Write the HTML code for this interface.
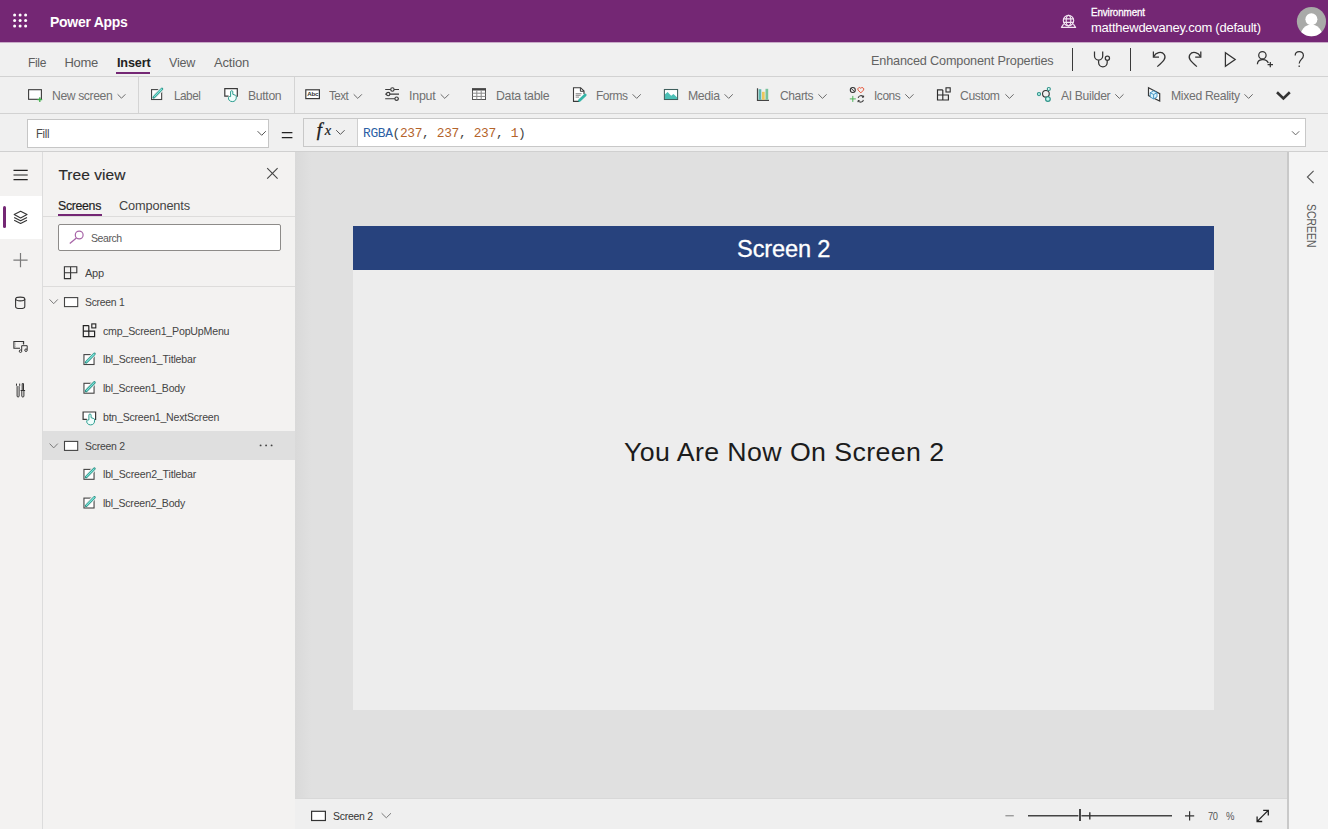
<!DOCTYPE html>
<html>
<head>
<meta charset="utf-8">
<title>Power Apps</title>
<style>
*{box-sizing:border-box;margin:0;padding:0}
html,body{width:1328px;height:830px;overflow:hidden;background:#f3f2f1;font-family:"Liberation Sans",sans-serif;color:#333}
.abs,.t{position:absolute}
.t{white-space:pre;line-height:1;color:#3b3a39}
svg{position:absolute;overflow:visible}
#hdr{left:0;top:0;width:1328px;height:43px;background:linear-gradient(#742774 0,#742774 42px,#c8abc8 42px,#c8abc8 43px)}
#menu{left:0;top:43px;width:1328px;height:33px;background:#f0f0f0}
#tool{left:0;top:76px;width:1328px;height:38px;background:#f0f0f0;border-top:1px solid #d2d2d2;border-bottom:1px solid #d2d2d2}
#fbar{left:0;top:114px;width:1328px;height:38px;background:#f0f0f0;border-bottom:1px solid #d0d0d0}
#rail{left:0;top:152px;width:43px;height:678px;background:#f3f2f1;border-right:1px solid #dcdcdc}
#tree{left:43px;top:152px;width:252px;height:678px;background:#f3f2f1}
#canvas{left:295px;top:152px;width:993px;height:646px;background:#e0e0e0}
#foot{left:295px;top:798px;width:993px;height:32px;background:#efefef;border-top:1px solid #d8d8d8}
#right{left:1287px;top:152px;width:41px;height:678px;background:#f4f4f4;border-left:2px solid #c9c9c9}
.w{color:#fff}
.tb{color:#6b6b6b}
</style>
</head>
<body>
<div class="abs" id="hdr"></div>
<div class="abs" id="menu"></div>
<div class="abs" id="tool"></div>
<div class="abs" id="fbar"></div>
<div class="abs" id="rail"></div>
<div class="abs" id="tree"></div>
<div class="abs" id="canvas"></div>
<div class="abs" id="foot"></div>
<div class="abs" id="right"></div>
<!-- HEADER -->
<svg style="left:13px;top:13px" width="15" height="15" viewBox="0 0 15 15" fill="#fff">
<circle cx="1.6" cy="2" r="1.5"/><circle cx="7.1" cy="2" r="1.5"/><circle cx="12.6" cy="2" r="1.5"/>
<circle cx="1.6" cy="7.5" r="1.5"/><circle cx="7.1" cy="7.5" r="1.5"/><circle cx="12.6" cy="7.5" r="1.5"/>
<circle cx="1.6" cy="13" r="1.5"/><circle cx="7.1" cy="13" r="1.5"/><circle cx="12.6" cy="13" r="1.5"/>
</svg>
<span class="t" style="left:49.5px;top:15px;font-size:14.5px;letter-spacing:-0.288px;transform-origin:0 0;transform:scaleX(0.9641);font-weight:700;color:#fff">Power Apps</span>
<svg style="left:1060px;top:14px" width="18" height="16" viewBox="1060 14 18 16" fill="none" stroke="#f1e4f1" stroke-width="1.15">
<circle cx="1068.5" cy="20.6" r="5.2"/><ellipse cx="1068.5" cy="20.6" rx="2.3" ry="5.2"/><path d="M1063.6 18.8h9.8M1063.6 22.4h9.8"/>
<path d="M1063.6 24.2 L1061.4 27.4 H1075.6 L1073.4 24.2" stroke-linejoin="round"/>
</svg>
<span class="t" style="left:1090.7px;top:8px;font-size:10px;letter-spacing:-0.097px;transform-origin:0 0;transform:scaleX(0.9806);color:#fff;-webkit-text-stroke:.3px #fff">Environment</span>
<span class="t" style="left:1090.7px;top:21px;font-size:13.5px;letter-spacing:-0.246px;transform-origin:0 0;transform:scaleX(0.9610);color:#fff">matthewdevaney.com (default)</span>
<svg style="left:1296px;top:6px" width="32" height="32" viewBox="1296 6 32 32">
<defs><clipPath id="avc"><circle cx="1311.45" cy="21.6" r="14.6"/></clipPath></defs>
<circle cx="1311.45" cy="21.6" r="14.6" fill="#a9aaa8"/>
<g clip-path="url(#avc)" fill="#fff"><circle cx="1311.4" cy="19.2" r="6"/><ellipse cx="1311.4" cy="37.2" rx="11.2" ry="12.8"/></g>
</svg>
<!-- MENU ROW -->
<span class="t" style="left:27.5px;top:56px;font-size:13px;letter-spacing:-0.369px;transform-origin:0 0;transform:scaleX(0.9242);color:#5e5e5e">File</span>
<span class="t" style="left:64.5px;top:56px;font-size:13px;letter-spacing:-0.297px;color:#5e5e5e">Home</span>
<span class="t" style="left:116.5px;top:56px;font-size:13px;letter-spacing:-0.159px;transform-origin:0 0;transform:scaleX(0.9723);font-weight:700;color:#222">Insert</span>
<div class="abs" style="left:116px;top:72px;width:34px;height:2px;background:#742774"></div>
<span class="t" style="left:169px;top:56px;font-size:13px;letter-spacing:-0.244px;transform-origin:0 0;transform:scaleX(0.9638);color:#5e5e5e">View</span>
<span class="t" style="left:214px;top:56px;font-size:13px;letter-spacing:-0.190px;color:#5e5e5e">Action</span>
<span class="t" style="left:871.3px;top:54px;font-size:13px;letter-spacing:-0.168px;transform-origin:0 0;transform:scaleX(0.9740);color:#636363">Enhanced Component Properties</span>
<div class="abs" style="left:1072px;top:48px;width:1px;height:23px;background:#3a3a3a"></div>
<div class="abs" style="left:1130px;top:48px;width:1px;height:23px;background:#3a3a3a"></div>
<svg style="left:0;top:0" width="1328" height="80" viewBox="0 0 1328 80" fill="none" stroke="#333" stroke-width="1.25" stroke-linecap="butt">
<!-- stethoscope -->
<path d="M1094.5 51.5 V56 a4.1 4.1 0 0 0 8.2 0 V51.5"/>
<path d="M1098.6 60.2 V62.5 a4.3 4.3 0 0 0 8.6 0 V60.4"/>
<circle cx="1107.4" cy="58.2" r="2.1"/>
<!-- undo -->
<path d="M1153.4 51.4 V57 H1159"/>
<path d="M1153.8 56.8 C1155.5 52.6 1161.5 50.6 1164.3 54.6 C1166.6 58.2 1163.6 61.2 1157.3 66.6"/>
<!-- redo -->
<path d="M1200.8 51.4 V57 H1195.2"/>
<path d="M1200.4 56.8 C1198.7 52.6 1192.7 50.6 1189.9 54.6 C1187.6 58.2 1190.6 61.2 1196.9 66.6"/>
<!-- play -->
<path d="M1225.4 52.7 V66.3 L1235.2 59.5 Z" stroke-linejoin="miter"/>
<!-- user plus -->
<circle cx="1262.4" cy="55.2" r="3.7"/>
<path d="M1257.4 64.3 C1257.4 58.8 1266.2 58 1268.3 63"/>
<path d="M1267.6 64.6 H1273 M1270.3 62 V67.2"/>
<!-- question -->
<path d="M1295.2 55.6 C1295.2 50.4 1303.4 50.4 1303.4 55.4 C1303.4 59.4 1299.2 59.4 1299.2 63.6"/>
<path d="M1299.2 65.4 V67" />
</svg>
<!-- TOOLBAR ROW -->
<div class="abs" style="left:138px;top:77px;width:1px;height:36px;background:#d4d4d4"></div>
<div class="abs" style="left:294px;top:77px;width:1px;height:36px;background:#d4d4d4"></div>
<span class="t" style="left:51.9px;top:89px;font-size:13px;letter-spacing:-0.417px;transform-origin:0 0;transform:scaleX(0.9353);color:#707070;">New screen</span>
<span class="t" style="left:173.7px;top:89px;font-size:13px;letter-spacing:-0.551px;transform-origin:0 0;transform:scaleX(0.9051);color:#707070;">Label</span>
<span class="t" style="left:247.8px;top:89px;font-size:13px;letter-spacing:-0.358px;transform-origin:0 0;transform:scaleX(0.9394);color:#707070;">Button</span>
<span class="t" style="left:329.4px;top:89px;font-size:13px;letter-spacing:-0.568px;transform-origin:0 0;transform:scaleX(0.8947);color:#707070;">Text</span>
<span class="t" style="left:408.7px;top:89px;font-size:13px;letter-spacing:-0.242px;transform-origin:0 0;transform:scaleX(0.9563);color:#707070;">Input</span>
<span class="t" style="left:495.8px;top:89px;font-size:13px;letter-spacing:-0.303px;transform-origin:0 0;transform:scaleX(0.9461);color:#707070;">Data table</span>
<span class="t" style="left:595.5px;top:89px;font-size:13px;letter-spacing:-0.534px;transform-origin:0 0;transform:scaleX(0.9218);color:#707070;">Forms</span>
<span class="t" style="left:687.7px;top:89px;font-size:13px;letter-spacing:-0.382px;transform-origin:0 0;transform:scaleX(0.9430);color:#707070;">Media</span>
<span class="t" style="left:779.9px;top:89px;font-size:13px;letter-spacing:-0.433px;transform-origin:0 0;transform:scaleX(0.9272);color:#707070;">Charts</span>
<span class="t" style="left:873.7px;top:89px;font-size:13px;letter-spacing:-0.478px;transform-origin:0 0;transform:scaleX(0.9167);color:#707070;">Icons</span>
<span class="t" style="left:960.4px;top:89px;font-size:13px;letter-spacing:-0.441px;transform-origin:0 0;transform:scaleX(0.9372);color:#707070;">Custom</span>
<span class="t" style="left:1060.7px;top:89px;font-size:13px;letter-spacing:-0.354px;transform-origin:0 0;transform:scaleX(0.9330);color:#707070;">AI Builder</span>
<span class="t" style="left:1170.7px;top:89px;font-size:13px;letter-spacing:-0.355px;transform-origin:0 0;transform:scaleX(0.9371);color:#707070;">Mixed Reality</span>
<svg style="left:0;top:0" width="1328" height="114" viewBox="0 0 1328 114" fill="none" stroke="#3a3a3a" stroke-width="1.1">
<!-- small chevrons -->
<g stroke="#6a6a6a" stroke-width="1">
<path d="M117.6 94.3 l3.9 3.9 l3.9 -3.9"/>
<path d="M353.7 94.3 l4.1 4.1 l4.1 -4.1"/>
<path d="M440.7 94.3 l4.1 4.1 l4.1 -4.1"/>
<path d="M632.6 94.3 l4.1 4.1 l4.1 -4.1"/>
<path d="M724.6 94.3 l4.1 4.1 l4.1 -4.1"/>
<path d="M818.4 94.3 l4.1 4.1 l4.1 -4.1"/>
<path d="M905.3 94.3 l4.1 4.1 l4.1 -4.1"/>
<path d="M1005.4 94.3 l4.1 4.1 l4.1 -4.1"/>
<path d="M1115.3 94.3 l4.1 4.1 l4.1 -4.1"/>
<path d="M1244.5 94.3 l4.1 4.1 l4.1 -4.1"/>
</g>
<!-- overflow chevron -->
<path d="M1277 92.3 l6.4 6.2 l6.4 -6.2" stroke="#333" stroke-width="2.6"/>
<!-- new screen -->
<rect x="28.6" y="89.7" width="12.8" height="9.6" fill="#fff"/>
<path d="M37.4 99.6 h4.8 M39.8 97.2 v4.8" stroke="#3fae49" stroke-width="1.3"/>
<!-- label -->
<rect x="151.55" y="89.6" width="10.1" height="9.9" fill="#fff" stroke="#444" stroke-width="1.1"/>
<path d="M155.5 95.4 L162 88.8" stroke="#f0f0f0" stroke-width="4.6" stroke-linecap="round"/>
<path d="M153.7 97.3 L162 88.8" stroke="#2a8f84" stroke-width="2.5" stroke-linecap="round"/>
<path d="M154.1 96.9 L161.8 89" stroke="#7fe9de" stroke-width="1.1" stroke-linecap="round"/>
<!-- button -->
<g id="btnico" fill="none"><path d="M228.6 96.1 H224.8 V88.7 H237.3 V96.1 H236.4" fill="#fff" stroke="#3a3a3a" stroke-width="1.2"/>
<path d="M230.6 96 V91.8 a1.1 1.1 0 0 1 2.2 0 V94.3 L235.5 95.3 Q236.4 95.7 236.3 96.8 C236.5 100 234.8 101.6 232.3 101.6 C229.6 101.6 228 99.4 228.5 97.5 Q229 96.1 230.6 96.6 z" fill="#effdfb" stroke="#2a9d8f" stroke-width="1"/></g>
<!-- text -->
<rect x="305.8" y="89.8" width="13.6" height="8.8" fill="#fff" stroke-width="1.2"/>
<!-- input -->
<path d="M385.2 89.5 h13.8 M385.2 94.1 h13.8 M385.2 98.7 h13.8" stroke-width="1.1"/>
<circle cx="392.4" cy="89.5" r="1.7" fill="#f0f0f0"/><circle cx="388.2" cy="94.1" r="1.7" fill="#f0f0f0"/><circle cx="396.6" cy="98.7" r="1.7" fill="#f0f0f0"/>
<!-- data table -->
<rect x="472.5" y="88.8" width="13" height="10.7" fill="#fff" stroke="#555" stroke-width="1"/>
<path d="M472 89.4 h14" stroke="#444" stroke-width="2.2"/>
<path d="M472.5 93.2 h13 M472.5 96.4 h13 M476.8 90.5 v9 M481.2 90.5 v9" stroke="#8a8a8a" stroke-width="1"/>
<!-- forms -->
<path d="M579 101.4 H573.5 V87.7 H580.6 L584 91.1 V94" fill="#fff" stroke-width="1.1"/>
<path d="M580.4 87.9 V91.3 H583.8" stroke-width="1"/>
<path d="M575.6 93.6 h6 M575.6 95.4 h5 M575.6 97.2 h3.5" stroke="#a0a0a0" stroke-width="1.3"/>
<path d="M579.4 100.4 L585.2 94.9" stroke="#36b5a8" stroke-width="2.8" stroke-linecap="round"/>
<!-- media -->
<rect x="664.4" y="89.5" width="13.2" height="10" fill="#fff" stroke="#3f5f5d" stroke-width="1.05"/>
<path d="M665 99 V94.2 l2.6 -2.3 l3.6 3.8 l2.2 -1.7 l3.6 3.2 V99 z" fill="#4cc0b6" stroke="none"/>
<!-- charts -->
<path d="M757.5 88.3 V100.4 H769" stroke="#444" stroke-width="1.2"/>
<rect x="758.6" y="89.2" width="2.7" height="10.6" fill="#5fb7b0" stroke="none"/>
<rect x="762" y="91.8" width="2.7" height="8" fill="#ecc75e" stroke="none"/>
<rect x="765.5" y="88.8" width="2.7" height="11" fill="#79c39a" stroke="none"/>
<!-- icons -->
<circle cx="852.8" cy="90" r="2.5" stroke="#333" stroke-width="1.1"/><path d="M851 88.2 l3.6 3.6" stroke="#333" stroke-width="1"/>
<path d="M860.8 92.9 l-2.7 -2.8 a1.6 1.6 0 0 1 2.7 -1.8 a1.6 1.6 0 0 1 2.7 1.8 z" stroke="#e7583c" stroke-width="1" fill="none"/>
<path d="M849.8 98.9 h6 M852.8 95.9 v6" stroke="#4cb357" stroke-width="1"/>
<path d="M858.2 98 a2.8 2.8 0 0 1 5 -1.2 M863.4 99.8 a2.8 2.8 0 0 1 -5 1.2" stroke="#444" stroke-width="1.1"/>
<path d="M863.6 95.6 v1.6 h-1.6 M858 102.2 v-1.6 h1.6" stroke="#333" stroke-width="1"/>
<!-- custom -->
<path d="M942.8 89.9 H937.5 V100 H948.4 V95 H937.5 M942.8 89.9 V100" stroke="#2e2e2e" stroke-width="1.15"/>
<rect x="946" y="87.8" width="4.2" height="4.2" stroke="#2e2e2e" stroke-width="1.1"/>
<!-- ai builder -->
<circle cx="1045.9" cy="93.8" r="3.35" stroke="#333" stroke-width="1.1"/>
<circle cx="1039" cy="94.1" r="1.6" stroke="#2f9389" stroke-width="1.1" fill="#b5f3ec"/>
<circle cx="1048.8" cy="89" r="1.55" stroke="#2f9389" stroke-width="1.1" fill="#e6fffb"/>
<circle cx="1047.9" cy="99.1" r="2.35" stroke="#2f9389" stroke-width="1.2" fill="#c6f6f0"/>
<!-- mixed reality -->
<path d="M1148.5 87.8 V95.6 L1159.7 101 V93.6 Z" stroke="#3a3a3a" stroke-width="1.2" fill="#fff" stroke-linejoin="miter"/>
<path d="M1153.6 90.9 L1157 92.7 V97 L1153.6 98.9 L1150.2 97 V92.7 Z" fill="#dcf3fb" stroke="#3d8fc2" stroke-width=".9" stroke-linejoin="round"/>
<path d="M1150.2 92.7 L1153.6 94.5 L1157 92.7 M1153.6 94.5 V98.9" stroke="#3d8fc2" stroke-width=".9"/>
</svg>
<span class="t" style="left:307.2px;top:91.2px;font-size:6.2px;font-weight:700;color:#333;letter-spacing:-0.2px">Abc</span>
<!-- FORMULA BAR -->
<div class="abs" style="left:27px;top:119px;width:242px;height:29px;background:#fff;border:1px solid #c6c6c6"></div>
<span class="t" style="left:35.8px;top:128px;font-size:12.5px;letter-spacing:-0.346px;transform-origin:0 0;transform:scaleX(0.9051);color:#4a4a4a">Fill</span>
<div class="abs" style="left:303px;top:118px;width:1003px;height:29px;background:#fff;border:1px solid #c8c8c8"></div>
<div class="abs" style="left:304px;top:119px;width:54px;height:27px;background:#f0f0f0;border-right:1px solid #cfcfcf"></div>
<span class="t" style="left:316.8px;top:121px;font-size:18.5px;font-family:'Liberation Serif',serif;font-style:italic;color:#1a1a1a;-webkit-text-stroke:.35px #1a1a1a">f</span>
<span class="t" style="left:324.8px;top:123px;font-size:14.5px;font-family:'Liberation Serif',serif;font-style:italic;color:#1a1a1a;-webkit-text-stroke:.2px #1a1a1a">x</span>
<span class="t" style="left:362.6px;top:127px;font-size:13.5px;font-family:'Liberation Mono',monospace;letter-spacing:-0.361px;transform-origin:0 0;transform:scaleX(0.9534);color:#444"><span style="color:#2c5fa5">RGBA</span>(<span style="color:#b4632a">237</span>, <span style="color:#b4632a">237</span>, <span style="color:#b4632a">237</span>, <span style="color:#b4632a">1</span>)</span>
<svg style="left:0;top:0" width="1328" height="152" viewBox="0 0 1328 152" fill="none" stroke="#555" stroke-width="1">
<path d="M257.6 131.2 l4.1 4.1 l4.1 -4.1"/>
<path d="M336.2 130.2 l4.2 4.2 l4.2 -4.2"/>
<path d="M1292 131.3 l3.6 3.6 l3.6 -3.6" stroke="#666"/>
<path d="M281.8 132.6 h10.6 M281.8 137.6 h10.6" stroke="#222" stroke-width="1.25"/>
</svg>
<!-- LEFT RAIL -->
<div class="abs" style="left:0;top:196px;width:42px;height:42.5px;background:#fff"></div>
<div class="abs" style="left:3px;top:206px;width:3px;height:22px;background:#742774;border-radius:1.5px"></div>
<svg style="left:0;top:152px" width="43" height="300" viewBox="0 152 43 300" fill="none" stroke="#333" stroke-width="1.1">
<path d="M13.5 170.4 h14.2 M13.5 175 h14.2 M13.5 179.6 h14.2" stroke="#222" stroke-width="1.2"/>
<!-- layers -->
<path d="M20.6 211.3 l6.4 3.3 l-6.4 3.3 l-6.4 -3.3 z" stroke-linejoin="round"/>
<path d="M14.2 217.4 l6.4 3.3 l6.4 -3.3 M14.2 220.2 l6.4 3.3 l6.4 -3.3" stroke-linejoin="round"/>
<!-- plus -->
<path d="M13.4 260.1 h14.2 M20.5 253 v14.2" stroke="#7a7a7a" stroke-width="1.2"/>
<!-- cylinder -->
<path d="M15.6 299 V306.4 a4.6 2.1 0 0 0 9.2 0 V299"/>
<ellipse cx="20.2" cy="299" rx="4.6" ry="1.9"/>
<!-- media -->
<path d="M20 348.2 H13.9 V341.5 H23.6 V344.4" stroke-width="1.1"/>
<path d="M15.4 342.6 v4.6 M22.2 342.6 v1.4" stroke="#9a9a9a" stroke-width=".8" stroke-dasharray="1 .8"/>
<path d="M21.7 350.6 V345.7 H27.2 V349.6" stroke-width="1"/>
<circle cx="20.5" cy="351.2" r="1.25" stroke-width="1"/><circle cx="26" cy="350.2" r="1.25" stroke-width="1"/>
<!-- tools -->
<path d="M16.5 383.6 v1.6 a1.3 1.3 0 0 0 .6 1.1 V396 a1 1 0 0 0 2 0 V386.3 a1.3 1.3 0 0 0 .6 -1.1 v-1.6" stroke-width=".95" stroke="#2a2a2a"/>
<path d="M22.2 390.4 V383.6 h1.3 V390.4 M20.6 390.5 h4.5 M21.8 390.8 V396 a1 1 0 0 0 2.1 0 V390.8" stroke-width=".95" stroke="#2a2a2a"/>
</svg>
<!-- TREE VIEW -->
<span class="t" style="left:58.4px;top:167px;font-size:15.5px;letter-spacing:0.055px;color:#2b2b2b;-webkit-text-stroke:.15px #2b2b2b">Tree view</span>
<span class="t" style="left:58.4px;top:199px;font-size:13px;letter-spacing:-0.336px;transform-origin:0 0;transform:scaleX(0.9481);color:#1f1f1f;-webkit-text-stroke:.2px #1f1f1f">Screens</span>
<span class="t" style="left:119.1px;top:199px;font-size:13px;letter-spacing:-0.136px;transform-origin:0 0;transform:scaleX(0.9812);color:#444">Components</span>
<div class="abs" style="left:43px;top:216px;width:252px;height:1px;background:#dddcdb"></div>
<div class="abs" style="left:58px;top:214px;width:44px;height:2px;background:#742774"></div>
<div class="abs" style="left:58px;top:224px;width:223px;height:27px;background:#fff;border:1px solid #8d8b89;border-radius:2px"></div>
<span class="t" style="left:91.2px;top:233px;font-size:11.5px;letter-spacing:-0.470px;transform-origin:0 0;transform:scaleX(0.9162);color:#5a5a5a">Search</span>
<span class="t" style="left:85.4px;top:268px;font-size:11.5px;letter-spacing:-0.261px;transform-origin:0 0;transform:scaleX(0.9602);color:#444">App</span>
<div class="abs" style="left:43px;top:286px;width:252px;height:1px;background:#dddcdb"></div>
<div class="abs" style="left:43px;top:431px;width:252px;height:29px;background:#dfdfdf"></div>
<span class="t" style="left:85px;top:297px;font-size:11px;letter-spacing:-0.289px;transform-origin:0 0;transform:scaleX(0.9445);color:#444">Screen 1</span>
<span class="t" style="left:103px;top:326px;font-size:11px;letter-spacing:-0.210px;transform-origin:0 0;transform:scaleX(0.9662);color:#444">cmp_Screen1_PopUpMenu</span>
<span class="t" style="left:103px;top:354px;font-size:11px;letter-spacing:-0.187px;transform-origin:0 0;transform:scaleX(0.9613);color:#444">lbl_Screen1_Titlebar</span>
<span class="t" style="left:103px;top:383px;font-size:11px;letter-spacing:-0.228px;transform-origin:0 0;transform:scaleX(0.9574);color:#444">lbl_Screen1_Body</span>
<span class="t" style="left:103px;top:412px;font-size:11px;letter-spacing:-0.224px;transform-origin:0 0;transform:scaleX(0.9592);color:#444">btn_Screen1_NextScreen</span>
<span class="t" style="left:85px;top:441px;font-size:11px;letter-spacing:-0.264px;transform-origin:0 0;transform:scaleX(0.9495);color:#444">Screen 2</span>
<span class="t" style="left:103px;top:469px;font-size:11px;letter-spacing:-0.187px;transform-origin:0 0;transform:scaleX(0.9613);color:#444">lbl_Screen2_Titlebar</span>
<span class="t" style="left:103px;top:498px;font-size:11px;letter-spacing:-0.228px;transform-origin:0 0;transform:scaleX(0.9574);color:#444">lbl_Screen2_Body</span>
<svg style="left:43px;top:152px" width="252" height="400" viewBox="43 152 252 400" fill="none" stroke="#333" stroke-width="1.1">
<!-- close X -->
<path d="M267.2 168.2 l10.4 10.4 M277.6 168.2 l-10.4 10.4" stroke="#444" stroke-width="1.1"/>
<!-- magnifier -->
<circle cx="79.2" cy="235" r="3.9" stroke="#a765a7" stroke-width="1.2"/>
<path d="M76.4 237.9 L69.8 243.4" stroke="#a765a7" stroke-width="1.3"/>
<!-- app icon -->
<path d="M64.4 266.8 H76.8 V272.8 H64.4 Z M70.6 266.8 V278.6 H64.4 V272.8" stroke="#333" stroke-width="1.1"/>
<!-- chevrons -->
<path d="M49.6 299.4 l4.1 4.3 l4.1 -4.3 M49.6 443.6 l4.1 4.3 l4.1 -4.3" stroke="#7a7a7a" stroke-width="1"/>
<!-- screen icons -->
<rect x="64.5" y="297.6" width="13.2" height="9" fill="#fff" stroke="#444"/>
<rect x="64.5" y="441.4" width="13.2" height="9" fill="#fff" stroke="#444"/>
<!-- component icon -->
<path d="M88.8 325.6 H83.3 V336.7 H94.6 V331.2 H83.3 M88.8 325.6 V336.7" stroke="#222" stroke-width="1.2"/>
<rect x="91.8" y="323.9" width="4" height="4" stroke="#222" stroke-width="1.1"/>
<!-- label icons -->
<g id="lbl1"><rect x="83.95" y="354.6" width="10.1" height="9.9" fill="#fff" stroke="#444" stroke-width="1.1"/>
<path d="M87.9 360.4 L94.4 353.8" stroke="#f3f2f1" stroke-width="4.4" stroke-linecap="round"/>
<path d="M86.1 362.3 L94.4 353.8" stroke="#2a8f84" stroke-width="2.6" stroke-linecap="round"/>
<path d="M86.5 361.9 L94.2 354" stroke="#7fe9de" stroke-width="1.1" stroke-linecap="round"/></g>
<use href="#lbl1" y="28.7"/><use href="#lbl1" y="114.8"/><use href="#lbl1" y="143.5"/>
<!-- button icon -->
<g transform="translate(-141.7 323.3)" fill="none"><path d="M228.6 96.1 H224.8 V88.7 H237.3 V96.1 H236.4" fill="#fff" stroke="#3a3a3a" stroke-width="1.2"/>
<path d="M230.6 96 V91.8 a1.1 1.1 0 0 1 2.2 0 V94.3 L235.5 95.3 Q236.4 95.7 236.3 96.8 C236.5 100 234.8 101.6 232.3 101.6 C229.6 101.6 228 99.4 228.5 97.5 Q229 96.1 230.6 96.6 z" fill="#effdfb" stroke="#2a9d8f" stroke-width="1"/></g>
<!-- ellipsis -->
<g fill="#444" stroke="none"><circle cx="260.6" cy="445.4" r=".95"/><circle cx="266.1" cy="445.4" r=".95"/><circle cx="271.6" cy="445.4" r=".95"/></g>
</svg>
<!-- CANVAS -->
<div class="abs" style="left:295px;top:152px;width:16px;height:646px;background:linear-gradient(90deg,#d9d9d9,#e0e0e0)"></div>
<div class="abs" style="left:353px;top:226px;width:861px;height:484px;background:#ededed"></div>
<div class="abs" style="left:353px;top:225.5px;width:861px;height:44.2px;background:#27427d"></div>
<span class="t" style="left:737.1px;top:238px;font-size:23.6px;letter-spacing:-0.155px;color:#fff;-webkit-text-stroke:.3px #fff">Screen 2</span>
<span class="t" style="left:623.7px;top:439px;font-size:26px;letter-spacing:0.390px;transform-origin:0 0;transform:scaleX(1.0288);color:#1c1c1c">You Are Now On Screen 2</span>
<!-- FOOTER -->
<span class="t" style="left:333.2px;top:811px;font-size:11px;letter-spacing:-0.264px;transform-origin:0 0;transform:scaleX(0.9495);color:#333">Screen 2</span>
<span class="t" style="left:1208px;top:812px;font-size:10px;letter-spacing:-0.356px;transform-origin:0 0;transform:scaleX(0.9316);color:#555">70</span>
<span class="t" style="left:1226px;top:812px;font-size:10px;letter-spacing:-0.453px;transform-origin:0 0;transform:scaleX(0.9464);color:#555">%</span>
<svg style="left:295px;top:799px" width="993" height="31" viewBox="295 799 993 31" fill="none" stroke="#333" stroke-width="1.1">
<rect x="311.6" y="811.3" width="13.8" height="9.2" fill="#fff" stroke="#333" stroke-width="1.2"/>
<path d="M381.6 813.2 l4.7 4.6 l4.7 -4.6" stroke="#7a7a7a" stroke-width="1"/>
<path d="M1005.4 815.8 h8.4" stroke="#7a7a7a" stroke-width="1"/>
<path d="M1028 815.8 h144" stroke="#444" stroke-width="1.5"/>
<path d="M1078.4 808.8 h3 v12.4 h-3 z" fill="#f0f0f0" stroke="none"/>
<path d="M1080 809 v12" stroke="#333" stroke-width="1.8"/>
<path d="M1089.8 812.2 v7.2" stroke="#333" stroke-width="1.4"/>
<path d="M1185 815.8 h9.2 M1189.6 811.2 v9.2" stroke="#333" stroke-width="1.2"/>
<path d="M1257.2 821.4 L1268.2 810.4 M1263.2 810.3 h5.1 v5.1 M1257.1 816.4 v5.1 h5.1" stroke="#222" stroke-width="1.3"/>
</svg>
<!-- RIGHT PANEL -->
<svg style="left:1289px;top:152px" width="39" height="120" viewBox="1289 152 39 120" fill="none" stroke="#555" stroke-width="1.1">
<path d="M1313.6 170.8 l-6.2 6.2 l6.2 6.2"/>
</svg>
<span class="t" style="left:1316.6px;top:203.8px;font-size:12.5px;color:#5c5c5c;transform-origin:0 0;transform:rotate(90deg) scaleX(.835)">SCREEN</span>
<div class="abs" style="left:0;top:829px;width:1328px;height:1px;background:#fff"></div>
</body>
</html>
